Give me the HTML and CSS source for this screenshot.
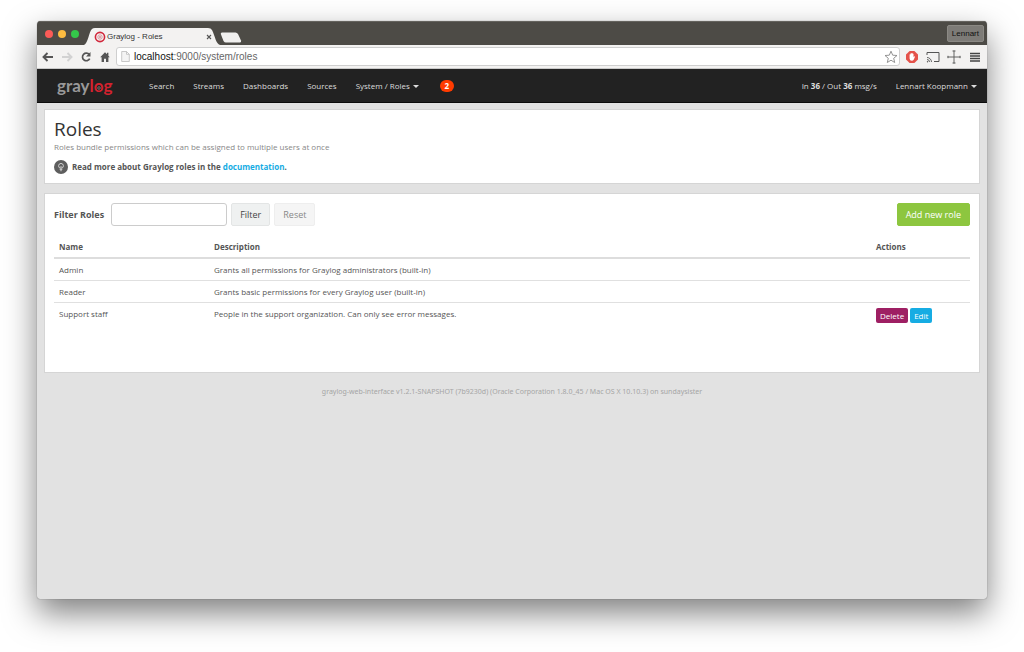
FILE: index.html
```html
<!DOCTYPE html>
<html lang="en">
<head>
<meta charset="utf-8">
<title>Graylog - Roles</title>
<link rel="stylesheet" href="styles.css">
</head>
<body>
<div class="window">
  <div class="titlebar">
    <div class="lights"><span class="light red"></span><span class="light amber"></span><span class="light green"></span></div>
    <div class="tab">
      <svg class="tab-shape" viewBox="0 0 136 17" preserveAspectRatio="none" aria-hidden="true"><path d="M0 17C4 16 5 3 8 1Q9 0 11 0H124Q127 0 128 2C131 8 132 16 136 17Z" fill="#f3f2f1"/></svg>
      <svg class="favicon" viewBox="0 0 12 12" aria-hidden="true"><circle cx="6" cy="6" r="4.6" fill="#f7eeee" stroke="#d1283c" stroke-width="1.6"/><circle cx="6" cy="6" r="2.2" fill="none" stroke="#c98a92" stroke-width=".8"/><circle cx="6" cy="6" r=".8" fill="#b55"/></svg>
      <span class="tab-title">Graylog - Roles</span>
      <button class="tab-close" type="button" aria-label="Close tab"><svg viewBox="0 0 6 6"><path d="M1 1L5 5M5 1L1 5" stroke="#555" stroke-width="1.1"/></svg></button>
    </div>
    <svg class="new-tab" viewBox="0 0 22 11" aria-hidden="true"><path d="M2 .5H15.5Q17 .5 18 2L21 8.500Q21.500 10.500 20 10.500H6Q4.500 10.500 3.500 9L.8 2Q.5 .5 2 .5Z" fill="#f0efee"/></svg>
    <button class="profile" type="button">Lennart</button>
  </div>
  <div class="toolbar">
    <div class="tools">
      <button class="tool" type="button" aria-label="Back"><svg viewBox="0 0 12 12"><path d="M11 6H2M5.500 2L1.500 6L5.500 10" fill="none" stroke="#555" stroke-width="1.900"/></svg></button>
      <button class="tool" type="button" aria-label="Forward"><svg viewBox="0 0 12 12"><path d="M1 6H10M6.500 2L10.500 6L6.500 10" fill="none" stroke="#d2d2d2" stroke-width="1.900"/></svg></button>
      <button class="tool" type="button" aria-label="Reload"><svg viewBox="0 0 12 12"><path d="M9.300 3.600A3.800 3.800 0 1 0 9.700 7.600" fill="none" stroke="#555" stroke-width="1.700"/><path d="M10.500 1V5.500H6Z" fill="#555"/></svg></button>
      <button class="tool" type="button" aria-label="Home"><svg viewBox="0 0 12 12"><path d="M6 1.200L1.200 6.300H2.600V11H5V7.800H7V11H9.400V6.300H10.800L9.400 4.800V1.800H8V3.300Z" fill="#555"/></svg></button>
    </div>
    <div class="address">
      <svg class="page-icon" viewBox="0 0 9 11" aria-hidden="true"><path d="M.7 .5H5.500L8.300 3.300V10.500H.7ZM5.500 .5V3.300H8.300" fill="#f4f4f4" stroke="#bbb" stroke-width=".8"/></svg>
      <span class="url"><span class="host">localhost</span>:9000/system/roles</span>
      <button class="star" type="button" aria-label="Bookmark"><svg viewBox="0 0 14 14"><path d="M7 1.200L8.700 5.200L13 5.500L9.700 8.300L10.700 12.500L7 10.200L3.300 12.500L4.300 8.300L1 5.500L5.300 5.200Z" fill="#fff" stroke="#888" stroke-width=".9"/></svg></button>
    </div>
    <div class="extensions">
      <svg class="ext" viewBox="0 0 14 14" role="img" aria-label="Ad blocker"><path d="M4.600 1H9.400L13 4.600V9.400L9.400 13H4.600L1 9.400V4.600Z" fill="#e4524a"/><path d="M4.600 7V4.600Q5 4 5.500 4.600V3.600Q6 3 6.500 3.600V3.200Q7 2.700 7.500 3.200V3.800Q8 3.300 8.500 4V7L9.400 6.200Q10.200 6.200 9.900 7L8.800 9.500Q8.200 10.800 6.800 10.800Q4.600 10.800 4.600 8.500Z" fill="#fff"/></svg>
      <svg class="ext" viewBox="0 0 14 14" role="img" aria-label="Cast"><path d="M1 5V2.500H13V11.500H8" fill="none" stroke="#555"/><path d="M1 7.500A4.500 4.500 0 0 1 5.500 12M1 9.500A2.500 2.500 0 0 1 3.500 12" fill="none" stroke="#555" stroke-width=".9"/><circle cx="1.500" cy="11.700" r=".7" fill="#555"/></svg>
      <svg class="ext" viewBox="0 0 14 14" role="img" aria-label="Crosshair"><path d="M7 .5V13.500M.5 7H13.500M5.500 1H8.500M5.500 13H8.500M1 5.800V8.200M13 5.800V8.200" stroke="#555" stroke-width=".9"/></svg>
      <svg class="ext" viewBox="0 0 14 14" role="img" aria-label="Menu"><path d="M2 3.500H12M2 6H12M2 8.500H12M2 11H12" stroke="#444" stroke-width="1.600"/></svg>
    </div>
  </div>

  <nav class="navbar">
    <a class="brand" href="#">gray<span class="brand-log">l<span class="brand-o">o<svg viewBox="0 0 8 8" aria-hidden="true"><circle cx="4" cy="4" r="2.400" fill="#222"/><circle cx="4" cy="4" r="1.300" fill="none" stroke="#888" stroke-width=".7"/></svg></span>g</span></a>
    <div class="links">
      <a href="#">Search</a>
      <a href="#">Streams</a>
      <a href="#">Dashboards</a>
      <a href="#">Sources</a>
      <a href="#">System / Roles <span class="caret"></span></a>
      <a class="badge" href="#">2</a>
    </div>
    <div class="account">
      <span>In <b>36</b> / Out <b>36</b> msg/s</span>
      <a href="#">Lennart Koopmann <span class="caret"></span></a>
    </div>
  </nav>

  <main class="content">
    <section class="panel intro">
      <h1>Roles</h1>
      <p class="lead">Roles bundle permissions which can be assigned to multiple users at once</p>
      <p class="hint">
        <svg viewBox="0 0 14 14" aria-hidden="true"><circle cx="7" cy="7" r="7" fill="#5e5e5e"/><path d="M5.800 8.200Q4.600 7 4.600 5.700Q4.800 3.500 7 3.400Q9.200 3.500 9.400 5.700Q9.400 7 8.200 8.200Z" fill="none" stroke="#ddd" stroke-width=".9"/><path d="M5.700 9.500H8.300M6.200 10.700H7.800M7 6V8" stroke="#ddd" stroke-width=".8"/></svg>
        <span>Read more about Graylog roles in the <a href="#">documentation</a>.</span>
      </p>
    </section>

    <section class="panel list">
      <div class="actions-row">
        <form class="filter">
          <label for="filter">Filter Roles</label>
          <input id="filter" type="text">
          <button class="btn" type="button">Filter</button>
          <button class="btn muted" type="button">Reset</button>
        </form>
        <button class="btn add" type="button">Add new role</button>
      </div>
      <table>
        <thead><tr><th class="name">Name</th><th>Description</th><th class="acts">Actions</th></tr></thead>
        <tbody>
          <tr><td>Admin</td><td>Grants all permissions for Graylog administrators (built-in)</td><td></td></tr>
          <tr><td>Reader</td><td>Grants basic permissions for every Graylog user (built-in)</td><td></td></tr>
          <tr><td>Support staff</td><td>People in the support organization. Can only see error messages.</td><td><div class="row-buttons"><button class="mini delete" type="button">Delete</button><button class="mini edit" type="button">Edit</button></div></td></tr>
        </tbody>
      </table>
    </section>
    <footer>graylog-web-interface v1.2.1-SNAPSHOT (7b9230d) (Oracle Corporation 1.8.0_45 / Mac OS X 10.10.3) on sundaysister</footer>
  </main>
</div>
</body>
</html>
```
FILE: styles.css
```css
* { box-sizing: border-box; }
body {
  margin: 0;
  padding: 21px 37px 53px;
  min-height: 100vh;
  display: flex;
  background: #fff;
  color: #555;
  font: 8px/12px "Open Sans", sans-serif;
}
button { font: inherit; color: inherit; border: 0; background: none; padding: 0; }
a { text-decoration: none; }
svg { display: block; }
h1, p { margin: 0; }

.window {
  flex: 1;
  display: flex;
  flex-direction: column;
  border-radius: 4px 4px 3px 3px;
  overflow: hidden;
  background: #e2e2e2;
  box-shadow: 0 0 1px rgba(0, 0, 0, .6), 0 14px 32px rgba(0, 0, 0, .5);
}

.titlebar {
  display: flex;
  align-items: center;
  height: 24px;
  padding: 0 3px 0 8px;
  background: #4d4b46;
  border-top: 1px solid #65635e;
}
.lights { display: flex; gap: 5px; }
.light { width: 8px; height: 8px; border-radius: 50%; }
.red { background: #fc5b57; }
.amber { background: #fdbc40; }
.green { background: #34c84a; }
.tab {
  position: relative;
  align-self: flex-end;
  display: flex;
  align-items: center;
  gap: 1px;
  width: 136px;
  height: 17px;
  margin-left: 5px;
  padding: 0 8px 0 10px;
  color: #333;
  font: 8px/16px "Liberation Sans", sans-serif;
}
.tab-shape { position: absolute; inset: 0; width: 100%; height: 100%; }
.favicon { position: relative; width: 12px; height: 12px; }
.tab-title { position: relative; flex: 1; }
.tab-close { position: relative; width: 6px; height: 6px; }
.new-tab { width: 22px; height: 11px; margin-top: 8px; }
.profile {
  margin-left: auto;
  height: 17px;
  padding: 0 4px;
  border: 1px solid #8b8984;
  border-radius: 2px;
  background: #7d7b77;
  color: #111;
  font: 8px/15px "Liberation Sans", sans-serif;
}

.toolbar {
  display: flex;
  align-items: center;
  gap: 5px;
  height: 24px;
  padding: 0 5px;
  background: #f3f2f1;
  border-bottom: 1px solid #c9c9c9;
}
.tools { display: flex; gap: 7px; }
.tool, .tool svg { width: 12px; height: 12px; }
.address {
  flex: 1;
  display: flex;
  align-items: center;
  gap: 4px;
  height: 19px;
  padding: 0 1px 0 4px;
  border: 1px solid #cfcfcf;
  border-radius: 3px;
  background: #fff;
}
.page-icon { width: 9px; height: 11px; }
.url { flex: 1; color: #666; font: 10px/17px "Liberation Sans", sans-serif; }
.host { color: #111; }
.star svg { width: 14px; height: 14px; }
.extensions { display: flex; gap: 7px; }
.ext { width: 14px; height: 14px; }

.navbar {
  display: flex;
  align-items: center;
  height: 34px;
  padding: 0 10px 0 20px;
  background: #222;
  border-bottom: 1px solid #0c0c0c;
  color: #ddd;
}
.navbar a { color: #ddd; }
.navbar .brand {
  width: 92px;
  color: #999;
  font: 700 17px/24px Lato, sans-serif;
}
.navbar .brand-log { color: #d3222f; }
.brand-o { position: relative; }
.brand-o svg { position: absolute; left: 1px; bottom: 4px; width: 8px; height: 8px; }
.links { display: flex; align-items: center; gap: 19px; }
.navbar .badge {
  width: 14px;
  margin-left: 2px;
  border-radius: 6px;
  background: #ff3b00;
  color: #fff;
  font-weight: 700;
  text-align: center;
}
.account { display: flex; gap: 19px; margin-left: auto; }
.caret {
  display: inline-block;
  margin-left: 1px;
  border: 3px solid transparent;
  border-top-color: currentColor;
  border-bottom: 0;
  vertical-align: 1px;
}

.content { padding: 6px 7px; }
.panel { background: #fff; border: 1px solid #d5d5d5; padding: 9px; }
h1 { margin-bottom: 2px; color: #333; font-size: 19px; line-height: 20px; font-weight: 400; }
.lead { color: #888; }
.hint { display: flex; align-items: center; gap: 4px; margin-top: 7px; font-weight: 700; }
.hint svg { width: 14px; height: 14px; }
.hint a { color: #16ace3; }
.list { margin-top: 9px; min-height: 180px; }
.actions-row { display: flex; justify-content: space-between; }
.filter { display: flex; align-items: center; gap: 4px; }
.filter label { margin-right: 3px; font-size: 9px; font-weight: 700; }
.filter input {
  width: 116px;
  height: 23px;
  padding: 0 6px;
  border: 1px solid #ccc;
  border-radius: 3px;
  font: inherit;
}
.btn {
  height: 23px;
  padding: 0 8px;
  border: 1px solid #e3e5e5;
  border-radius: 2px;
  background: #eff1f1;
  color: #444;
  font-size: 9px;
}
.btn.muted { background: #f5f5f5; border-color: #eee; color: #888; }
.btn.add { background: #8dc63f; border-color: #8dc63f; color: #fff; }

table { width: 100%; margin-top: 10px; border-collapse: collapse; table-layout: fixed; }
th, td { padding: 5px; text-align: left; vertical-align: top; font-weight: 400; }
th { padding-bottom: 4px; font-weight: 700; border-bottom: 2px solid #ddd; }
tbody tr + tr td { border-top: 1px solid #e0e0e0; }
td { padding-bottom: 4px; }
.name { width: 155px; }
.acts { width: 99px; }
.row-buttons { display: flex; gap: 2px; }
.mini {
  height: 15px;
  padding: 0 4px;
  border-radius: 2px;
  color: #fff;
}
.delete { background: #9e1f63; }
.edit { background: #16ace3; }
footer { margin-top: 13px; color: #a5a5a5; font: 7px/12px "Noto Sans", sans-serif; text-align: center; }
```
